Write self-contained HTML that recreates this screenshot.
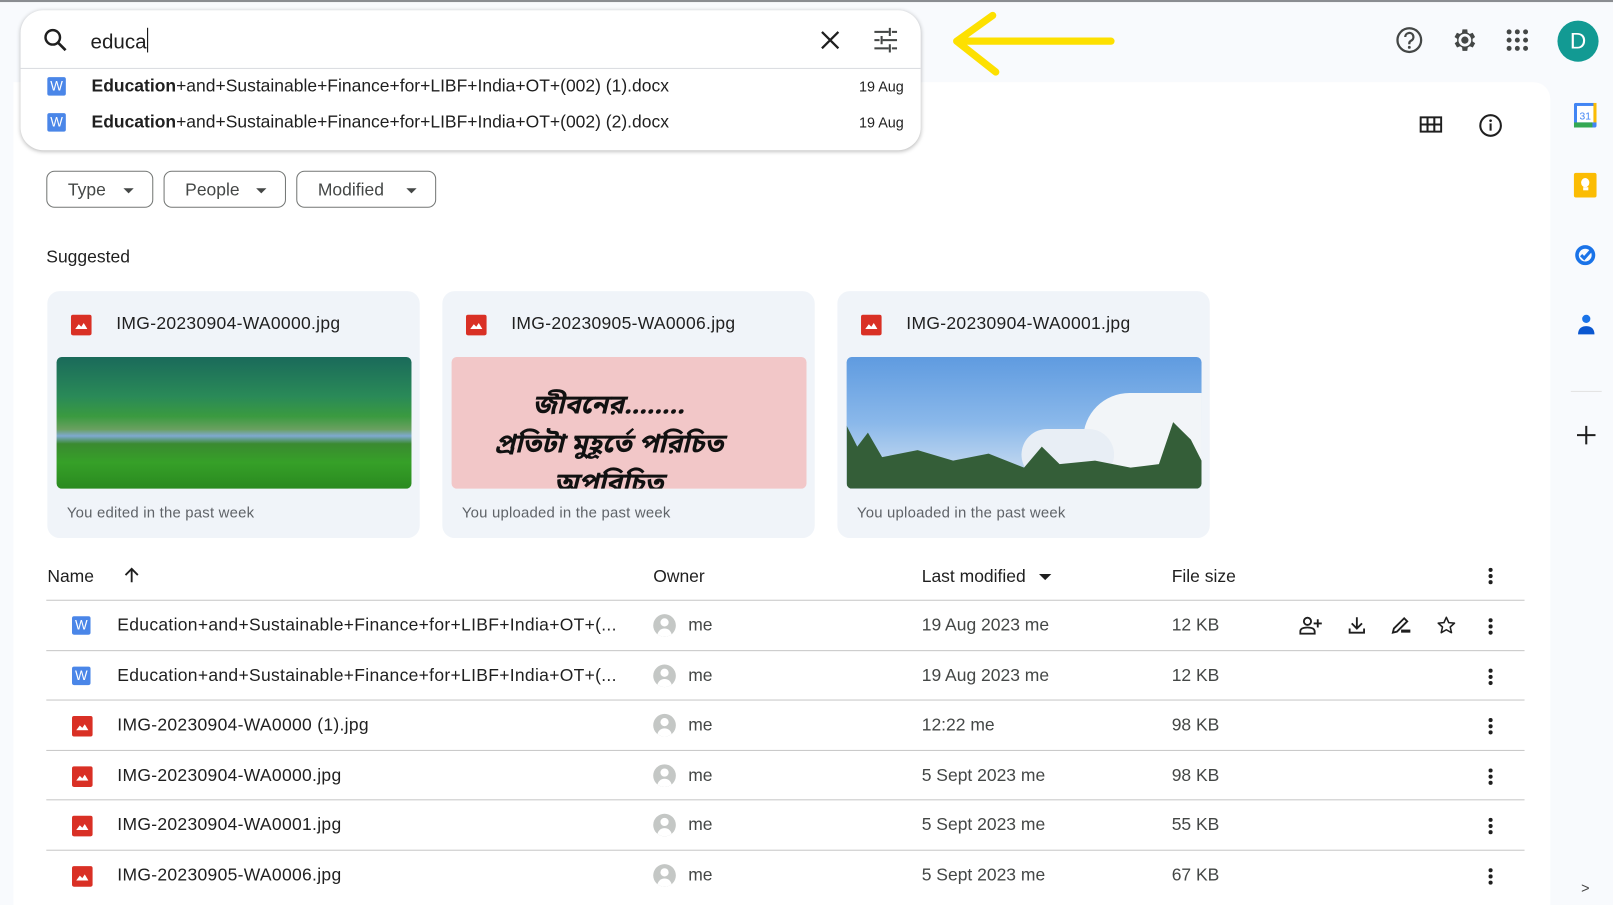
<!DOCTYPE html>
<html><head><meta charset="utf-8">
<style>
html,body{margin:0;padding:0;width:1613px;height:897px;overflow:hidden;background:#f8fafd;}
#w{position:absolute;left:0;top:0;width:1568px;height:872px;transform:scale(1.02870);transform-origin:0 0;font-family:"Liberation Sans",Arial,sans-serif;color:#1f1f1f;}
.a{position:absolute;}
.topline{left:0;top:0;width:1568px;height:2px;background:#8a8d91;}
.panel{left:13px;top:80px;width:1494px;height:800px;background:#fff;border-top-right-radius:16px;}
.search{left:20px;top:10px;width:875px;height:136px;background:#fff;border-radius:22px;box-shadow:0 1px 4px rgba(0,0,0,.28);}
.sep{left:20px;top:66px;width:875px;height:1px;background:#dadce0;}
.sug{font-size:17px;color:#1f1f1f;letter-spacing:0px;}
.w{width:18px;height:18px;background:#4a86e8;color:#fff;font-size:13px;line-height:18px;text-align:center;border-radius:2px;}
.im{width:20px;height:20px;background:#d93025;border-radius:2px;position:absolute;}
.im:after{content:"";position:absolute;left:4px;top:8px;width:12px;height:6px;background:#fff;clip-path:polygon(0 100%,30% 20%,50% 60%,70% 0,100% 100%);}
.chip{top:166px;height:36px;border:1px solid #747775;border-radius:8px;font-size:17px;line-height:36px;color:#444746;box-sizing:border-box;padding-left:20px;}
.chip:after{content:"";position:absolute;right:18px;top:16px;border-left:5px solid transparent;border-right:5px solid transparent;border-top:5px solid #444746;}
.card{top:283px;width:362px;height:240px;background:#f0f4f9;border-radius:12px;}
.card .t{position:absolute;left:67px;top:22px;font-size:17px;color:#1f1f1f;letter-spacing:0.3px;}
.card .im{position:absolute;left:23px;top:23px;}
.card .p{position:absolute;left:9px;top:64px;width:345px;height:128px;border-radius:5px;overflow:hidden;}
.card .s{position:absolute;left:19px;top:208px;font-size:14.5px;color:#5f6368;letter-spacing:0.2px;}
.hd{font-size:17px;color:#1f1f1f;top:551px;}
.row{left:45px;width:1437px;height:48px;border-top:1px solid #c7c7c7;}
.row .ic{position:absolute;left:25px;top:15px;}
.row .n{position:absolute;left:69px;top:14px;font-size:17px;letter-spacing:0.3px;}
.row .o{position:absolute;left:590px;top:13px;width:22px;height:22px;border-radius:50%;background:#c4c7c5;overflow:hidden;}
.row .o:before{content:"";position:absolute;left:7px;top:4px;width:8px;height:8px;border-radius:50%;background:#fff;}
.row .o:after{content:"";position:absolute;left:4px;top:14px;width:14px;height:10px;border-radius:7px 7px 0 0;background:#fff;}
.row .me{position:absolute;left:624px;top:14px;font-size:17px;color:#444746;}
.row .d{position:absolute;left:851px;top:14px;font-size:17px;color:#444746;}
.row .z{position:absolute;left:1094px;top:14px;font-size:17px;color:#444746;}
.dots{position:absolute;width:4px;}
.dots i{display:block;width:4px;height:4px;border-radius:50%;background:#1f1f1f;margin-bottom:2px;}
</style></head><body><div id="w">
<div class="a topline"></div>
<div class="a panel"></div>

<div class="a search"></div>
<svg class="a" style="left:41px;top:26px" width="26" height="26" viewBox="0 0 24 24"><circle cx="9.5" cy="9.5" r="6.5" fill="none" stroke="#1f1f1f" stroke-width="2.2"/><path d="M14.5 14.5L21 21" stroke="#1f1f1f" stroke-width="2.4"/></svg>
<div class="a" style="left:88px;top:27px;font-size:20px;">educa<span style="display:inline-block;width:1px;height:24px;background:#000;vertical-align:-4px"></span></div>
<svg class="a" style="left:796px;top:28px" width="22" height="22" viewBox="0 0 22 22"><path d="M3 3L19 19M19 3L3 19" stroke="#1f1f1f" stroke-width="2.2"/></svg>
<svg class="a" style="left:849px;top:27px" width="24" height="24" viewBox="0 0 24 24" fill="#444746"><rect x="1" y="3" width="14" height="2"/><rect x="18" y="3" width="5" height="2"/><rect x="15" y="0" width="2" height="8"/><rect x="1" y="11" width="5" height="2"/><rect x="9" y="11" width="14" height="2"/><rect x="7" y="8" width="2" height="8"/><rect x="1" y="19" width="14" height="2"/><rect x="18" y="19" width="5" height="2"/><rect x="15" y="16" width="2" height="8"/></svg>
<div class="a sep"></div>
<div class="a w" style="left:46px;top:75px">W</div>
<div class="a sug" style="left:89px;top:74px"><b>Education</b>+and+Sustainable+Finance+for+LIBF+India+OT+(002) (1).docx</div>
<div class="a" style="left:835px;top:76px;font-size:14px;">19 Aug</div>
<div class="a w" style="left:46px;top:110px">W</div>
<div class="a sug" style="left:89px;top:109px"><b>Education</b>+and+Sustainable+Finance+for+LIBF+India+OT+(002) (2).docx</div>
<div class="a" style="left:835px;top:111px;font-size:14px;">19 Aug</div>

<svg class="a" style="left:920px;top:5px" width="170" height="70" viewBox="0 0 170 70"><path d="M160 35H10M45 10L10 35L48 65" fill="none" stroke="#fde000" stroke-width="7" stroke-linecap="round" stroke-linejoin="round"/></svg>

<svg class="a" style="left:1356px;top:25px" width="28" height="28" viewBox="0 0 28 28"><circle cx="14" cy="14" r="11.5" fill="none" stroke="#444746" stroke-width="2.2"/><path d="M10 11a4 4 0 1 1 5.5 3.7c-1 .5-1.5 1.2-1.5 2.3v1" fill="none" stroke="#444746" stroke-width="2.2"/><circle cx="14" cy="21" r="1.4" fill="#444746"/></svg>
<svg class="a" style="left:1410px;top:25px" width="28" height="28" viewBox="0 0 24 24"><path fill="#444746" d="M19.4 13a7.5 7.5 0 0 0 0-2l2.1-1.6-2-3.5-2.5 1a7 7 0 0 0-1.7-1L15 3h-4l-.4 2.9a7 7 0 0 0-1.7 1l-2.5-1-2 3.5L6.6 11a7.5 7.5 0 0 0 0 2l-2.1 1.6 2 3.5 2.5-1a7 7 0 0 0 1.7 1L11 21h4l.4-2.9a7 7 0 0 0 1.7-1l2.5 1 2-3.5zM13 17.3A5.3 5.3 0 1 1 13 6.7a5.3 5.3 0 0 1 0 10.6z" transform="translate(-1 0)"/><circle cx="12" cy="12" r="3" fill="#444746"/></svg>
<svg class="a" style="left:1464px;top:28px" width="22" height="22" viewBox="0 0 22 22" fill="#444746"><circle cx="3" cy="3" r="2.4"/><circle cx="11" cy="3" r="2.4"/><circle cx="19" cy="3" r="2.4"/><circle cx="3" cy="11" r="2.4"/><circle cx="11" cy="11" r="2.4"/><circle cx="19" cy="11" r="2.4"/><circle cx="3" cy="19" r="2.4"/><circle cx="11" cy="19" r="2.4"/><circle cx="19" cy="19" r="2.4"/></svg>
<div class="a" style="left:1514px;top:20px;width:40px;height:40px;border-radius:50%;background:#129a93;color:#fff;font-size:22px;line-height:40px;text-align:center;">D</div>

<svg class="a" style="left:1380px;top:113px" width="22" height="16" viewBox="0 0 22 16"><rect x="1" y="1" width="20" height="14" fill="none" stroke="#1f1f1f" stroke-width="2"/><path d="M1 8H21M7.7 1V15M14.3 1V15" stroke="#1f1f1f" stroke-width="2"/></svg>
<svg class="a" style="left:1437px;top:110px" width="24" height="24" viewBox="0 0 24 24"><circle cx="12" cy="12" r="10" fill="none" stroke="#1f1f1f" stroke-width="2"/><rect x="11" y="10" width="2" height="7" fill="#1f1f1f"/><circle cx="12" cy="7.3" r="1.3" fill="#1f1f1f"/></svg>

<svg class="a" style="left:1530px;top:100px" width="22" height="24" viewBox="0 0 22 24"><rect x="0" y="0" width="22" height="24" rx="2" fill="#4285f4"/><rect x="3" y="3" width="16" height="16" fill="#fff"/><rect x="0" y="19" width="18" height="5" fill="#34a853"/><rect x="19" y="0" width="3" height="19" fill="#fbbc04"/><text x="11" y="16" font-size="10" text-anchor="middle" fill="#4285f4" font-family="Liberation Sans">31</text></svg>
<div class="a" style="left:1530px;top:168px;width:22px;height:24px;background:#fbbc04;border-radius:2px;"><div style="position:absolute;left:7px;top:5px;width:8px;height:9px;border-radius:50%;background:#fff"></div><div style="position:absolute;left:8.5px;top:14px;width:5px;height:3px;background:#fff"></div></div>
<svg class="a" style="left:1530px;top:235px" width="24" height="24" viewBox="0 0 24 24"><circle cx="11" cy="13" r="8" fill="none" stroke="#1a73e8" stroke-width="3.5"/><path d="M7 13l3 3 8-9" fill="none" stroke="#1a73e8" stroke-width="3"/></svg>
<svg class="a" style="left:1532px;top:305px" width="20" height="22" viewBox="0 0 20 22"><circle cx="10" cy="5" r="4" fill="#1a73e8"/><path d="M2 20c0-6 4-8 8-8s8 2 8 8z" fill="#0b57d0"/></svg>
<div class="a" style="left:1527px;top:380px;width:30px;height:1px;background:#e3e3e3"></div>
<svg class="a" style="left:1532px;top:413px" width="20" height="20"><path d="M10 1V19M1 10H19" stroke="#1f1f1f" stroke-width="2"/></svg>
<div class="a" style="left:1537px;top:855px;font-size:14px;color:#444">&gt;</div>

<div class="a chip" style="left:45px;width:104px;">Type</div>
<div class="a chip" style="left:159px;width:119px;">People</div>
<div class="a chip" style="left:288px;width:136px;">Modified</div>

<div class="a" style="left:45px;top:240px;font-size:17px;color:#1f1f1f;">Suggested</div>

<div class="a card" style="left:46px;"><div class="im"></div><div class="t">IMG-20230904-WA0000.jpg</div>
<div class="p" style="background:linear-gradient(180deg,#1a6a5a 0%,#2a8a58 30%,#3a9a40 45%,#6aa060 55%,#7fa9d0 60%,#3a8a30 66%,#36a028 80%,#2a8a20 100%);"></div>
<div class="s">You edited in the past week</div></div>

<div class="a card" style="left:430px;"><div class="im"></div><div class="t">IMG-20230905-WA0006.jpg</div>
<div class="p" style="background:#f2c7c8;"><div style="position:absolute;left:-20px;width:345px;top:30px;text-align:center;font:bold italic 26px 'Noto Sans Bengali','Lohit Bengali',sans-serif;line-height:38px;color:#111;">জীবনের........<br>প্রতিটা মুহূর্তে পরিচিত<br>অপরিচিত</div></div>
<div class="s">You uploaded in the past week</div></div>

<div class="a card" style="left:814px;"><div class="im"></div><div class="t">IMG-20230904-WA0001.jpg</div>
<div class="p" style="background:linear-gradient(180deg,#5f9be0 0%,#8ab8ea 50%,#b9d3ef 80%);"><div style="position:absolute;left:230px;top:35px;width:120px;height:90px;border-radius:45px 0 0 45px;background:#f2f5f8"></div><div style="position:absolute;left:170px;top:70px;width:90px;height:50px;border-radius:25px;background:#e8eef5"></div><div style="position:absolute;left:0;top:60px;width:345px;height:68px;background:#345e38;clip-path:polygon(0 10%,3% 40%,6% 20%,10% 55%,20% 45%,30% 60%,40% 50%,50% 70%,55% 40%,60% 65%,70% 60%,80% 70%,88% 65%,92% 5%,97% 30%,100% 60%,100% 100%,0 100%)"></div></div>
<div class="s">You uploaded in the past week</div></div>

<div class="a hd" style="left:46px;">Name</div>
<svg class="a" style="left:120px;top:551px" width="16" height="16"><path d="M8 15V2M2 8l6-6 6 6" fill="none" stroke="#1f1f1f" stroke-width="1.8"/></svg>
<div class="a hd" style="left:635px;">Owner</div>
<div class="a hd" style="left:896px;">Last modified</div>
<div class="a" style="left:1010px;top:558px;border-left:6px solid transparent;border-right:6px solid transparent;border-top:6px solid #1f1f1f;"></div>
<div class="a hd" style="left:1139px;">File size</div>
<div class="dots" style="left:1447px;top:552px"><i></i><i></i><i></i></div>

<div class="a row" style="top:583px;"><div class="ic w">W</div><div class="n">Education+and+Sustainable+Finance+for+LIBF+India+OT+(...</div><div class="o"></div><div class="me">me</div><div class="d">19 Aug 2023 me</div><div class="z">12 KB</div>
<svg style="position:absolute;left:1218px;top:15px" width="22" height="18" viewBox="0 0 22 18"><circle cx="8" cy="5" r="3.5" fill="none" stroke="#1f1f1f" stroke-width="1.8"/><path d="M1 17v-2c0-3 3-4 7-4s7 1 7 4v2z" fill="none" stroke="#1f1f1f" stroke-width="1.8"/><path d="M18 3v8M14 7h8" stroke="#1f1f1f" stroke-width="1.8"/></svg>
<svg style="position:absolute;left:1265px;top:15px" width="18" height="18" viewBox="0 0 18 18"><path d="M9 1v10M4 7l5 5 5-5M2 12v4h14v-4" fill="none" stroke="#1f1f1f" stroke-width="1.8"/></svg>
<svg style="position:absolute;left:1307px;top:15px" width="20" height="18" viewBox="0 0 20 18"><path d="M2 16l1-4L13 2l3 3L6 15z" fill="none" stroke="#1f1f1f" stroke-width="1.8"/><rect x="10" y="13" width="9" height="3" fill="#1f1f1f"/></svg>
<svg style="position:absolute;left:1351px;top:14px" width="20" height="20" viewBox="0 0 24 24"><path d="M12 2.5l2.8 6.2 6.7.6-5 4.5 1.5 6.6L12 17l-6 3.4 1.5-6.6-5-4.5 6.7-.6z" fill="none" stroke="#1f1f1f" stroke-width="1.8" stroke-linejoin="round"/></svg>
<div class="dots" style="left:1402px;top:17px"><i></i><i></i><i></i></div></div>

<div class="a row" style="top:632px;"><div class="ic w">W</div><div class="n">Education+and+Sustainable+Finance+for+LIBF+India+OT+(...</div><div class="o"></div><div class="me">me</div><div class="d">19 Aug 2023 me</div><div class="z">12 KB</div><div class="dots" style="left:1402px;top:17px"><i></i><i></i><i></i></div></div>
<div class="a row" style="top:680px;"><div class="ic im"></div><div class="n">IMG-20230904-WA0000 (1).jpg</div><div class="o"></div><div class="me">me</div><div class="d">12:22 me</div><div class="z">98 KB</div><div class="dots" style="left:1402px;top:17px"><i></i><i></i><i></i></div></div>
<div class="a row" style="top:729px;"><div class="ic im"></div><div class="n">IMG-20230904-WA0000.jpg</div><div class="o"></div><div class="me">me</div><div class="d">5 Sept 2023 me</div><div class="z">98 KB</div><div class="dots" style="left:1402px;top:17px"><i></i><i></i><i></i></div></div>
<div class="a row" style="top:777px;"><div class="ic im"></div><div class="n">IMG-20230904-WA0001.jpg</div><div class="o"></div><div class="me">me</div><div class="d">5 Sept 2023 me</div><div class="z">55 KB</div><div class="dots" style="left:1402px;top:17px"><i></i><i></i><i></i></div></div>
<div class="a row" style="top:826px;"><div class="ic im"></div><div class="n">IMG-20230905-WA0006.jpg</div><div class="o"></div><div class="me">me</div><div class="d">5 Sept 2023 me</div><div class="z">67 KB</div><div class="dots" style="left:1402px;top:17px"><i></i><i></i><i></i></div></div>
</div></body></html>
